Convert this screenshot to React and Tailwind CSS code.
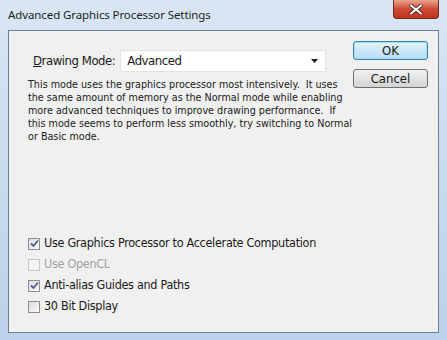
import React from "react";

const ui = { fontFamily: '"DejaVu Sans Condensed", "DejaVu Sans", sans-serif' };

const Check = ({ checked, disabled, label }) => (
  <div className="flex items-center h-[21px]">
    <div
      className={`w-[12px] h-[12px] border flex items-center justify-center ${
        disabled
          ? "border-[#c8c8c8] bg-[#f4f4f4]"
          : "border-[#8f8f8f] bg-gradient-to-br from-[#dcdcdc] to-[#fbfbfb]"
      }`}
    >
      {checked && (
        <svg width="9" height="9" viewBox="0 0 9 9">
          <path d="M1 4.5 L3.5 7 L8 1.5" fill="none" stroke="#4a5f97" strokeWidth="1.8" />
        </svg>
      )}
    </div>
    <span
      className={`ml-[4px] text-[12.5px] tracking-[-0.3px] leading-none ${
        disabled ? "text-[#a0a0a0]" : "text-[#1a1a1a]"
      }`}
    >
      {label}
    </span>
  </div>
);

export default function App() {
  return (
    <div className="w-[447px] h-[340px] relative overflow-hidden bg-gradient-to-b from-[#d9e6f4] via-[#c9dbee] to-[#bcd2ea]">
      <div className="absolute top-0 left-[393px] w-[46px] h-[19px] rounded-b-[4px] border border-[#6b2a22] border-t-0 bg-gradient-to-b from-[#e8a393] via-[#cd4a34] to-[#c2331d] flex items-center justify-center">
        <svg width="14" height="11" viewBox="0 0 14 11">
          <path d="M2 1.5 L12 9.5 M12 1.5 L2 9.5" stroke="#4a1a14" strokeWidth="3.6" strokeLinecap="round" />
          <path d="M2 1.5 L12 9.5 M12 1.5 L2 9.5" stroke="#ffffff" strokeWidth="2.2" strokeLinecap="round" />
        </svg>
      </div>

      <div className="flex flex-col h-full px-[8px] pb-[7px]">
        <div
          className="h-[30px] flex items-center pb-[1px] text-[11.5px] tracking-[-0.1px] text-[#1e1e1e]"
          style={{ fontFamily: '"Noto Sans", "Open Sans", sans-serif' }}
        >
          Advanced Graphics Processor Settings
        </div>

        <div className="flex-1 border border-[#6f7f92] bg-[#f0f0f0] flex relative" style={ui}>
          <div className="flex-1 flex flex-col pl-[19px]">
            <div className="flex items-center mt-[19px]">
              <span className="ml-[5px] text-[13px] tracking-[-0.45px] text-[#1a1a1a]">
                <span className="underline">D</span>rawing Mode:
              </span>
              <div className="ml-[5px] w-[206px] h-[22px] bg-white border border-[#e2e2e2] flex items-center justify-between pl-[6px] pr-[7px] text-[13px] tracking-[-0.45px] text-[#1a1a1a]">
                <span>Advanced</span>
                <svg width="7" height="4" viewBox="0 0 7 4">
                  <path d="M0 0 L7 0 L3.5 4 Z" fill="#1a1a1a" />
                </svg>
              </div>
            </div>
            <p className="mt-[6px] text-[10.7px] leading-[13px] text-[#1a1a1a] whitespace-pre">
              {"This mode uses the graphics processor most intensively.  It uses\nthe same amount of memory as the Normal mode while enabling\nmore advanced techniques to improve drawing performance.  If\nthis mode seems to perform less smoothly, try switching to Normal\nor Basic mode."}
            </p>

            <div className="mt-auto mb-[15px] flex flex-col">
              <Check checked label="Use Graphics Processor to Accelerate Computation" />
              <Check disabled label="Use OpenCL" />
              <Check checked label="Anti-alias Guides and Paths" />
              <Check label="30 Bit Display" />
            </div>
          </div>

          <div className="w-[87px] flex flex-col pt-[10px] pl-[1px]">
            <button className="w-[75px] h-[19px] rounded-[3px] border border-[#3c7fb1] bg-gradient-to-b from-[#e5f4fc] to-[#b5dcf4] text-[13px] leading-none text-[#1a1a1a] shadow-[inset_0_0_0_1px_#9fe3fb]">
              OK
            </button>
            <button className="mt-[9px] w-[75px] h-[19px] rounded-[3px] border border-[#707070] bg-gradient-to-b from-[#f2f2f2] to-[#d4d4d4] text-[13px] leading-none text-[#1a1a1a]">
              Cancel
            </button>
          </div>
        </div>
      </div>
    </div>
  );
}
